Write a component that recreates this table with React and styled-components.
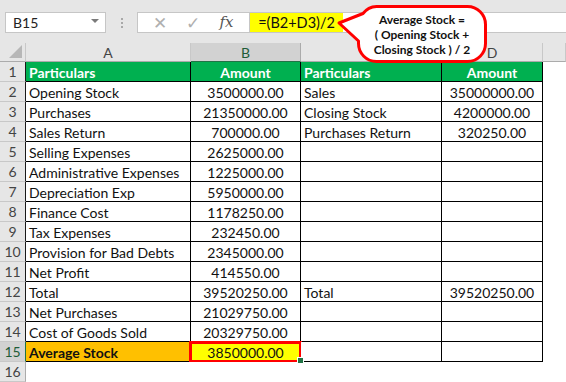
import React from "react";
import styled, { createGlobalStyle, css } from "styled-components";

const Global = createGlobalStyle`
  html, body { margin: 0; padding: 0; background: #ffffff; }
  * { box-sizing: border-box; }
`;

const FONT = `"Lato", "Liberation Sans", sans-serif`;

const Page = styled.div`
  position: relative;
  width: 566px;
  height: 382px;
  overflow: hidden;
  background: #ffffff;
  font-family: ${FONT};
`;

const TopBar = styled.div`
  height: 43px;
  background: #e6e6e6;
  display: flex;
  align-items: flex-start;
  padding: 12px 0 0 5px;
`;

const NameBox = styled.div`
  width: 101px;
  height: 21px;
  background: #fff;
  border: 1px solid #c6c6c6;
  display: flex;
  align-items: center;
  justify-content: space-between;
  padding: 0 6px 0 7px;
  font-size: 14px;
  color: #222;
`;

const Caret = styled.span`
  width: 0;
  height: 0;
  border-left: 4px solid transparent;
  border-right: 4px solid transparent;
  border-top: 4px solid #7a7a7a;
  margin-top: -3px;
`;

const Grip = styled.div`
  width: 31px;
  height: 21px;
  display: flex;
  flex-direction: column;
  align-items: center;
  justify-content: center;
  gap: 2px;
  & > i {
    width: 2px;
    height: 2px;
    background: #a8a8a8;
  }
`;

const FxBox = styled.div`
  width: 113px;
  height: 21px;
  background: #fff;
  border: 1px solid #c6c6c6;
  display: flex;
  align-items: center;
  justify-content: space-around;
  padding: 0 6px 0 6px;
`;

const FxGlyph = styled.span`
  font-size: ${(p) => p.$size || 16}px;
  color: ${(p) => p.$color || "#b0b0b0"};
  font-family: ${(p) => (p.$serif ? `"DejaVu Serif", "Liberation Serif", serif` : FONT)};
  font-style: ${(p) => (p.$italic ? "italic" : "normal")};
  line-height: 1;
`;

const FormulaInput = styled.div`
  flex: 1;
  height: 21px;
  margin-right: -2px;
  background: #fff;
  border: 1px solid #c6c6c6;
  border-left: none;
  display: flex;
`;

const FormulaText = styled.div`
  width: 93px;
  height: 100%;
  background: #ffff00;
  display: flex;
  align-items: center;
  justify-content: center;
  font-size: 14.5px;
  color: #111;
`;

const Sheet = styled.div`
  display: grid;
  grid-template-columns: 26px 165px 110px 141px 101px 1fr;
  grid-template-rows: 19px repeat(16, 20px);
  font-size: 14px;
  color: #111;
`;

const Corner = styled.div`
  background: #e6e6e6;
  border-right: 1px solid #c8c8c8;
  border-bottom: 1px solid #ababab;
  display: flex;
  align-items: flex-end;
  justify-content: flex-end;
  padding: 0 3px 3px 0;
  &::after {
    content: "";
    width: 0;
    height: 0;
    border-left: 13px solid transparent;
    border-bottom: 13px solid #b7b7b7;
  }
`;

const ColHead = styled.div`
  background: ${(p) => (p.$sel ? "#d2d2d2" : "#e6e6e6")};
  border-right: 1px solid ${(p) => (p.$sel ? "#ababab" : "#c8c8c8")};
  border-bottom: 1px solid ${(p) => (p.$sel ? "#217346" : "#ababab")};
  color: ${(p) => (p.$sel ? "#1e5c38" : "#444")};
  display: flex;
  align-items: center;
  justify-content: center;
  font-size: 14px;
`;

const RowHead = styled.div`
  background: ${(p) => (p.$sel ? "#d2d2d2" : "#e6e6e6")};
  border-bottom: 1px solid #c8c8c8;
  border-right: 1px solid
    ${(p) => (p.$sel ? "#217346" : p.$table ? "#1a1a1a" : "#ababab")};
  color: ${(p) => (p.$sel ? "#1e5c38" : "#444")};
  display: flex;
  align-items: center;
  justify-content: center;
  font-size: 14px;
`;

const Cell = styled.div`
  position: relative;
  display: flex;
  align-items: center;
  justify-content: ${(p) => (p.$center ? "center" : "flex-start")};
  padding: 1px 3px 0 3px;
  white-space: nowrap;
  background: ${(p) => p.$bg || "#ffffff"};
  color: ${(p) => p.$color || "#111"};
  font-weight: ${(p) => (p.$bold ? 700 : 400)};
  ${(p) =>
    p.$table &&
    css`
      border-right: 1px solid #000;
      border-bottom: 1px solid #000;
    `}
  ${(p) =>
    p.$active &&
    css`
      &::after {
        content: "";
        position: absolute;
        left: -2px;
        top: -1px;
        right: -2px;
        bottom: -2px;
        border: 3px solid #ff0000;
      }
      &::before {
        content: "";
        position: absolute;
        right: -4px;
        bottom: -3px;
        width: 5px;
        height: 5px;
        background: #217346;
        border: 1px solid #fff;
        z-index: 2;
      }
    `}
`;

const Callout = styled.div`
  position: absolute;
  left: 330px;
  top: 0;
  width: 165px;
  height: 70px;
`;

const CalloutShape = styled.svg`
  position: absolute;
  left: 0;
  top: 0;
`;

const CalloutText = styled.div`
  position: absolute;
  left: 27px;
  top: 5px;
  width: 130px;
  height: 58px;
  display: flex;
  align-items: center;
  justify-content: center;
  text-align: center;
  font-family: ${FONT};
  font-weight: 700;
  font-size: 12px;
  line-height: 15px;
  color: #111;
`;

const left = [
  ["Opening Stock", "3500000.00"],
  ["Purchases", "21350000.00"],
  ["Sales Return", "700000.00"],
  ["Selling Expenses", "2625000.00"],
  ["Administrative Expenses", "1225000.00"],
  ["Depreciation Exp", "5950000.00"],
  ["Finance Cost", "1178250.00"],
  ["Tax Expenses", "232450.00"],
  ["Provision for Bad Debts", "2345000.00"],
  ["Net Profit", "414550.00"],
  ["Total", "39520250.00"],
  ["Net Purchases", "21029750.00"],
  ["Cost of Goods Sold", "20329750.00"],
];

const right = {
  2: ["Sales", "35000000.00"],
  3: ["Closing Stock", "4200000.00"],
  4: ["Purchases Return", "320250.00"],
  12: ["Total", "39520250.00"],
};

export default function App() {
  const rows = [];
  rows.push(
    <React.Fragment key="r1">
      <RowHead $table>1</RowHead>
      <Cell $table $bg="#00b050" $color="#fff" $bold>Particulars</Cell>
      <Cell $table $bg="#00b050" $color="#fff" $bold $center>Amount</Cell>
      <Cell $table $bg="#00b050" $color="#fff" $bold>Particulars</Cell>
      <Cell $table $bg="#00b050" $color="#fff" $bold $center>Amount</Cell>
      <Cell />
    </React.Fragment>
  );
  left.forEach(([label, amt], i) => {
    const r = i + 2;
    const rc = right[r] || ["", ""];
    rows.push(
      <React.Fragment key={"r" + r}>
        <RowHead $table>{r}</RowHead>
        <Cell $table>{label}</Cell>
        <Cell $table $center>{amt}</Cell>
        <Cell $table>{rc[0]}</Cell>
        <Cell $table $center>{rc[1]}</Cell>
        <Cell />
      </React.Fragment>
    );
  });
  rows.push(
    <React.Fragment key="r15">
      <RowHead $sel>15</RowHead>
      <Cell $table $bg="#ffc000" $bold>Average Stock</Cell>
      <Cell $table $bg="#ffff00" $center $active>3850000.00</Cell>
      <Cell $table />
      <Cell $table />
      <Cell />
    </React.Fragment>
  );
  rows.push(
    <React.Fragment key="r16">
      <RowHead>16</RowHead>
      <Cell />
      <Cell />
      <Cell />
      <Cell />
      <Cell />
    </React.Fragment>
  );

  return (
    <Page>
      <Global />
      <TopBar>
        <NameBox>
          <span>B15</span>
          <Caret />
        </NameBox>
        <Grip>
          <i />
          <i />
          <i />
        </Grip>
        <FxBox>
          <FxGlyph $size={17}>✕</FxGlyph>
          <FxGlyph $size={17}>✓</FxGlyph>
          <FxGlyph $size={15} $color="#555" $serif $italic>
            fx
          </FxGlyph>
        </FxBox>
        <FormulaInput>
          <FormulaText>=(B2+D3)/2</FormulaText>
        </FormulaInput>
      </TopBar>
      <Sheet>
        <Corner />
        <ColHead>A</ColHead>
        <ColHead $sel>B</ColHead>
        <ColHead>C</ColHead>
        <ColHead>D</ColHead>
        <ColHead />
        {rows}
      </Sheet>
      <Callout>
        <CalloutShape width="165" height="70" viewBox="0 0 165 70">
          <path
            d="M 46.5 6.5 H 137.5 A 18 18 0 0 1 155.5 24.5 V 43.5 A 18 18 0 0 1 137.5 61.5 H 46.5 A 18 18 0 0 1 28.5 43.5 V 41 L 9 23 L 33 13.5 A 18 18 0 0 1 46.5 6.5 Z"
            fill="#ffffff"
            stroke="#ff0000"
            strokeWidth="3"
            strokeLinejoin="round"
          />
        </CalloutShape>
        <CalloutText>
          Average Stock =
          <br />( Opening Stock +
          <br />
          Closing Stock ) / 2
        </CalloutText>
      </Callout>
    </Page>
  );
}
